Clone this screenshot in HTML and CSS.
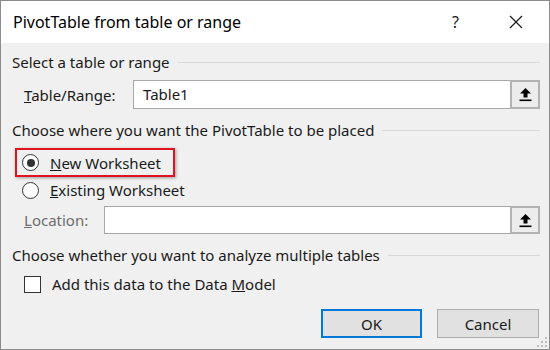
FILE: index.html
```html
<!DOCTYPE html>
<html lang="en">
<head>
  <meta charset="UTF-8" />
  <title>PivotTable from table or range</title>
  <link rel="stylesheet" href="styles.css">
</head>
<body>

  <!-- Dialog window -->
  <div class="dialog">

    <!-- Title bar -->
    <div class="titlebar">
      <span class="title">PivotTable from table or range</span>
      <span class="help">?</span>
      <svg class="close" width="14" height="14" viewBox="0 0 14 14">
        <path d="M1 1 L13 13 M13 1 L1 13" stroke="#1a1a1a" stroke-width="1.2" fill="none" />
      </svg>
    </div>

    <div class="content">

      <!-- Source range -->
      <div class="group-title"><span>Select a table or range</span><span class="rule"></span></div>
      <div class="field-row first">
        <label class="field-label"><u>T</u>able/Range:</label>
        <div class="ref-box">
          <div class="ref-input">Table1</div>
          <div class="ref-btn">
            <svg width="13" height="15" viewBox="0 0 13 15">
              <path d="M6.5 1 L12 6.5 L8.5 6.5 L8.5 10.5 L4.5 10.5 L4.5 6.5 L1 6.5 Z" fill="#000" />
              <rect x="0.5" y="12.5" width="12" height="1.6" fill="#000" />
            </svg>
          </div>
        </div>
      </div>

      <!-- Destination -->
      <div class="group-title spaced"><span>Choose where you want the PivotTable to be placed</span><span class="rule"></span></div>
      <div class="highlight">
        <span class="radio checked"></span>
        <span><u>N</u>ew Worksheet</span>
      </div>
      <div class="option-row">
        <span class="radio"></span>
        <span><u>E</u>xisting Worksheet</span>
      </div>
      <div class="field-row location">
        <label class="field-label disabled"><u>L</u>ocation:</label>
        <div class="ref-box">
          <div class="ref-input"></div>
          <div class="ref-btn">
            <svg width="13" height="15" viewBox="0 0 13 15">
              <path d="M6.5 1 L12 6.5 L8.5 6.5 L8.5 10.5 L4.5 10.5 L4.5 6.5 L1 6.5 Z" fill="#000" />
              <rect x="0.5" y="12.5" width="12" height="1.6" fill="#000" />
            </svg>
          </div>
        </div>
      </div>

      <!-- Data model -->
      <div class="group-title spaced"><span>Choose whether you want to analyze multiple tables</span><span class="rule"></span></div>
      <div class="option-row check-row">
        <span class="checkbox"></span>
        <span>Add this data to the Data <u>M</u>odel</span>
      </div>

      <!-- Buttons -->
      <div class="buttons">
        <button class="btn default">OK</button>
        <button class="btn">Cancel</button>
      </div>
    </div>

    <!-- Resize grip -->
    <div class="grip">
      <i style="right: 2px; bottom: 2px"></i>
      <i style="right: 6px; bottom: 2px"></i>
      <i style="right: 10px; bottom: 2px"></i>
      <i style="right: 2px; bottom: 6px"></i>
      <i style="right: 6px; bottom: 6px"></i>
      <i style="right: 2px; bottom: 10px"></i>
    </div>
  </div>

</body>
</html>
```

FILE: styles.css
```css
/* Page reset */
body {
  margin: 0;
  font-family: "Noto Sans", "Open Sans", sans-serif;
  font-size: 15px;
  color: #1a1a1a;
  background: #f0f0f0;
}

/* Dialog frame */
.dialog {
  position: relative;
  width: 550px;
  height: 350px;
  box-sizing: border-box;
  border: 1px solid #8c8c8c;
  background: #f0f0f0;
  display: flex;
  flex-direction: column;
}

/* Title bar */
.titlebar {
  height: 42px;
  background: #ffffff;
  display: flex;
  align-items: center;
  padding-left: 12px;
}

.title {
  font-size: 16px;
  color: #000;
  flex: 1;
}

.help {
  font-size: 16px;
  margin-right: 50px;
}

.close {
  margin-right: 26px;
}

/* Main body */
.content {
  padding: 0 9px 0 11px;
  display: flex;
  flex-direction: column;
}

/* Section heading with a rule after it */
.group-title {
  height: 20px;
  margin-top: 9px;
  display: flex;
  align-items: center;
}

.group-title.spaced {
  margin-top: 11px;
}

.rule {
  flex: 1;
  border-top: 1px solid #d9d9d9;
  margin-left: 8px;
  margin-top: 1px;
}

/* Label + reference box */
.field-row {
  display: flex;
  align-items: center;
  margin-top: 8px;
  margin-left: 12px;
  height: 29px;
}

.field-row.location {
  margin-top: 6px;
  height: 28px;
}

.field-label {
  width: 109px;
  flex: none;
}

.location .field-label {
  width: 80px;
}

.field-label.disabled {
  color: #6d6d6d;
}

.ref-box {
  flex: 1;
  display: flex;
  height: 100%;
}

.ref-input {
  flex: 1;
  background: #fff;
  border: 1px solid #a8a8a8;
  border-right: none;
  padding-left: 9px;
  line-height: 27px;
}

.ref-btn {
  width: 26px;
  border: 2px solid #b2b2b2;
  background: #ececec;
  display: flex;
  align-items: center;
  justify-content: center;
}

/* Radio options */
.highlight {
  margin-top: 8px;
  margin-left: 3px;
  width: 160px;
  height: 29px;
  box-sizing: border-box;
  border: 2px solid #e0141e;
  box-shadow: 1px 1px 3px rgba(0, 0, 0, 0.35);
  display: flex;
  align-items: center;
  padding-left: 5px;
}

.option-row {
  display: flex;
  align-items: center;
  height: 20px;
  margin-top: 3px;
  margin-left: 10px;
}

.radio {
  width: 15px;
  height: 15px;
  border: 1px solid #333;
  border-radius: 50%;
  background: #fff;
  margin-right: 11px;
  position: relative;
  flex: none;
}

.radio.checked::after {
  content: "";
  position: absolute;
  left: 3.5px;
  top: 3.5px;
  width: 8px;
  height: 8px;
  border-radius: 50%;
  background: #333;
}

.highlight .radio {
  margin-right: 11px;
}

/* Checkbox */
.check-row {
  margin-top: 9px;
  margin-left: 12px;
}

.checkbox {
  width: 15px;
  height: 15px;
  border: 1px solid #333;
  background: #fff;
  margin-right: 11px;
  flex: none;
}

/* Dialog buttons */
.buttons {
  display: flex;
  justify-content: flex-end;
  gap: 15px;
  margin-top: 15px;
  margin-right: 1px;
}

.btn {
  width: 102px;
  height: 29px;
  font-family: inherit;
  font-size: 15px;
  color: #1a1a1a;
  background: #e1e1e1;
  border: 1px solid #adadad;
  padding: 0;
}

.btn.default {
  border: 2px solid #0078d7;
  width: 101px;
}

/* Resize grip */
.grip {
  position: absolute;
  right: 0;
  bottom: 0;
  width: 14px;
  height: 14px;
}

.grip i {
  position: absolute;
  width: 2px;
  height: 2px;
  background: #bdbdbd;
}
```
